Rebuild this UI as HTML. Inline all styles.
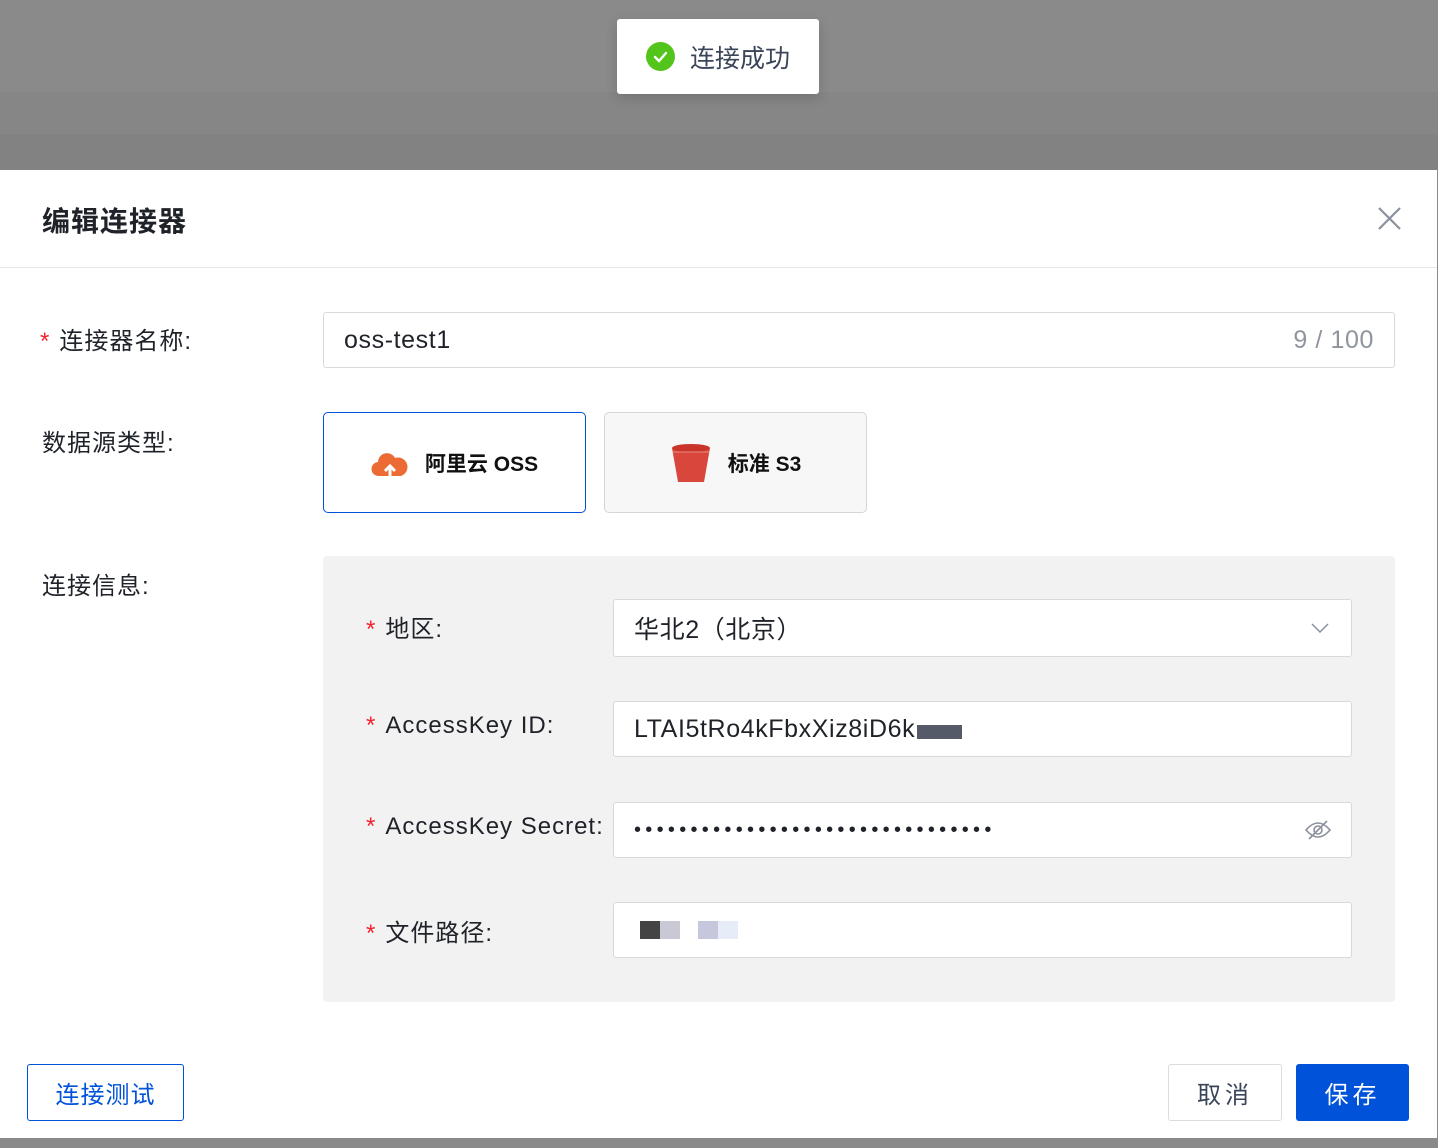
<!DOCTYPE html>
<html><head><meta charset="utf-8"><style>
*{box-sizing:border-box;margin:0;padding:0}
body{width:1438px;height:1148px;background:#8a8a8a;position:relative;overflow:hidden;font-family:"Liberation Sans","Noto Sans CJK SC",sans-serif;color:#1f2329}
.band1{position:absolute;left:0;top:92px;width:1438px;height:42px;background:#868686}
.band2{position:absolute;left:0;top:134px;width:1438px;height:36px;background:#828282}
.toast{position:absolute;left:617px;top:19px;width:202px;height:75px;background:#fff;border-radius:3px;box-shadow:0 4px 12px rgba(0,0,0,.15)}
.toast .ic{position:absolute;left:29px;top:23px;width:29px;height:29px;border-radius:50%;background:#52c41a}
.toast span{position:absolute;left:73px;top:20px;font-size:25px;color:#3b4559}
.modal{position:absolute;left:0;top:170px;width:1437px;height:968px;background:#fff}
.hd{height:98px;border-bottom:1px solid #e8e8e8;position:relative}
.hd h1{position:absolute;left:42px;top:30px;font-size:28px;letter-spacing:1px;font-weight:bold;color:#1f2329}
.lbl{position:absolute;font-size:24px;letter-spacing:1px;color:#1f2329}
.star{color:#f5222d;margin-right:9px}
.inp{position:absolute;border:1px solid #d9d9d9;border-radius:3px;background:#fff;font-size:25px;letter-spacing:.6px;color:#1f2329;padding-left:20px;display:flex;align-items:center}
.card{position:absolute;top:242px;width:263px;height:101px;border-radius:5px;display:flex;align-items:center;justify-content:center;font-size:21px;font-weight:bold;color:#111}
.btn{position:absolute;top:894px;height:57px;border-radius:3px;font-size:24px;display:flex;align-items:center;justify-content:center;letter-spacing:4px}
</style></head><body>
<div class="band1"></div><div class="band2"></div>
<div class="toast"><div class="ic"><svg width="29" height="29"><path d="M9 15l4 4 7-8" stroke="#fff" stroke-width="2.4" fill="none" stroke-linecap="round"/></svg></div><span>连接成功</span></div>
<div class="modal">
<div class="hd"><h1>编辑连接器</h1>
<svg style="position:absolute;left:1378px;top:37px" width="23" height="23"><path d="M1 1L22 22M22 1L1 22" stroke="#8a909c" stroke-width="2.2"/></svg></div>
<div class="lbl" style="left:40px;top:151px"><span class="star">*</span>连接器名称:</div>
<div class="inp" style="left:323px;top:142px;width:1072px;height:56px">oss-test1<span style="position:absolute;right:20px;color:#8f959e">9 / 100</span></div>
<div class="lbl" style="left:42px;top:253px">数据源类型:</div>
<div class="card" style="left:323px;border:1px solid #0052d9;background:#fff"><svg width="38" height="30" style="margin-right:16px"><path d="M8 28a7 7 0 0 1-1-14 9 9 0 0 1 17-4 8 8 0 0 1 6 18z" fill="#ec6b35"/><path d="M19 28v-9m-5 4l5-5 5 5" stroke="#fff" stroke-width="3" fill="none"/></svg>阿里云 OSS</div>
<div class="card" style="left:604px;border:1px solid #d6d6d6;background:#f7f7f7"><svg width="42" height="42" style="margin-right:16px"><path d="M2 6h38l-6 34H8z" fill="#d9473c"/><ellipse cx="21" cy="6" rx="19" ry="4" fill="#c9352b"/><path d="M3 10h36" stroke="#eb8a80" stroke-width="1"/></svg>标准 S3</div>
<div class="lbl" style="left:42px;top:396px">连接信息:</div>
<div style="position:absolute;left:323px;top:386px;width:1072px;height:446px;background:#f2f2f2;border-radius:4px"></div>
<div class="lbl" style="left:366px;top:439px"><span class="star">*</span>地区:</div>
<div class="inp" style="left:613px;top:429px;width:739px;height:58px">华北2（北京）<svg style="position:absolute;right:22px" width="18" height="10"><path d="M1 1l8 8 8-8" stroke="#8a909c" stroke-width="1.5" fill="none"/></svg></div>
<div class="lbl" style="left:366px;top:542px"><span class="star">*</span>AccessKey ID:</div>
<div class="inp" style="left:613px;top:531px;width:739px;height:56px">LTAI5tRo4kFbxXiz8iD6k<span style="display:inline-block;width:45px;height:14px;background:#555a68;margin-top:6px;margin-left:2px"></span></div>
<div class="lbl" style="left:366px;top:643px"><span class="star">*</span>AccessKey Secret:</div>
<div class="inp" style="left:613px;top:632px;width:739px;height:56px;letter-spacing:4.3px;font-size:20px">••••••••••••••••••••••••••••••••<svg style="position:absolute;right:20px" width="26" height="20"><path d="M1 10q12-14 24 0q-12 14-24 0z" stroke="#8a909c" stroke-width="1.6" fill="none"/><circle cx="13" cy="10" r="4" stroke="#8a909c" stroke-width="1.6" fill="none"/><path d="M4 19L22 1" stroke="#8a909c" stroke-width="1.6"/></svg></div>
<div class="lbl" style="left:366px;top:743px"><span class="star">*</span>文件路径:</div>
<div class="inp" style="left:613px;top:732px;width:739px;height:56px;padding-left:26px"><span style="display:inline-block;width:20px;height:18px;background:#444"></span><span style="display:inline-block;width:20px;height:18px;background:#c9c9d6"></span><span style="display:inline-block;width:20px;height:18px;margin-left:18px;background:#c6c6dc"></span><span style="display:inline-block;width:20px;height:18px;background:#e6ecf8"></span></div>
<div class="btn" style="left:27px;width:157px;border:1px solid #0052d9;color:#0052d9;letter-spacing:1px">连接测试</div>
<div class="btn" style="left:1168px;width:114px;border:1px solid #dcdcdc;color:#3b4559">取消</div>
<div class="btn" style="left:1296px;width:113px;background:#0052d9;color:#fff">保存</div>
</div>
</body></html>
